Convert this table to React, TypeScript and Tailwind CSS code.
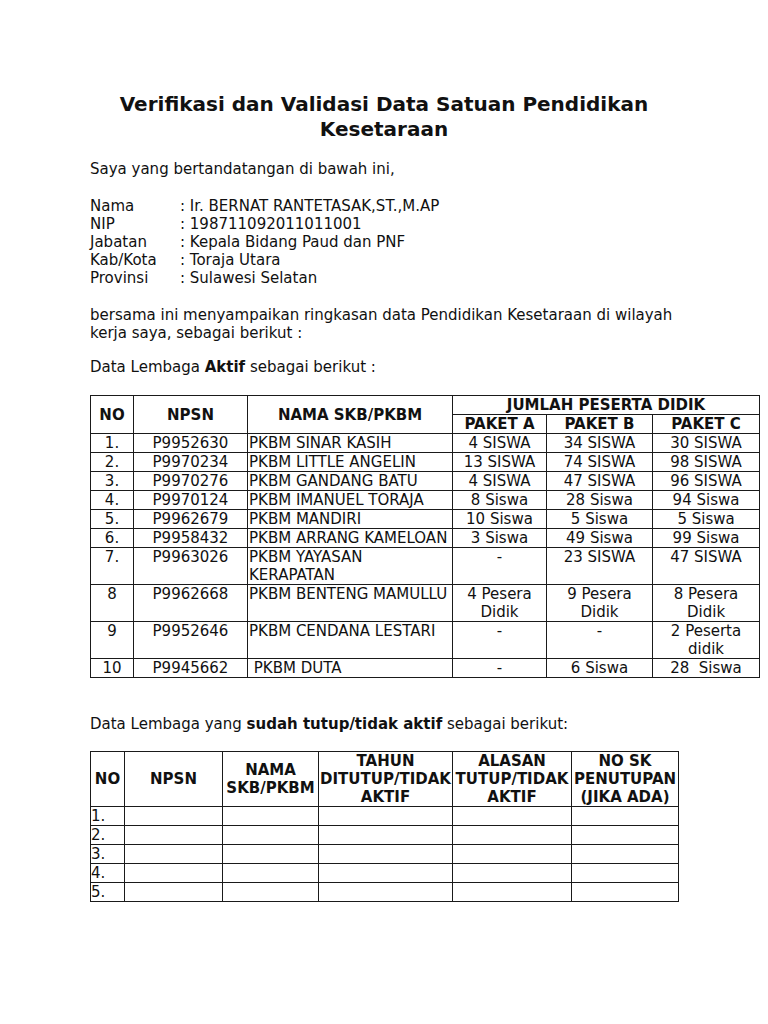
const aktif = [
  { no: "1.", npsn: "P9952630", nama: "PKBM SINAR KASIH", a: "4 SISWA", b: "34 SISWA", c: "30 SISWA" },
  { no: "2.", npsn: "P9970234", nama: "PKBM LITTLE ANGELIN", a: "13 SISWA", b: "74 SISWA", c: "98 SISWA" },
  { no: "3.", npsn: "P9970276", nama: "PKBM GANDANG BATU", a: "4 SISWA", b: "47 SISWA", c: "96 SISWA" },
  { no: "4.", npsn: "P9970124", nama: "PKBM IMANUEL TORAJA", a: "8 Siswa", b: "28 Siswa", c: "94 Siswa" },
  { no: "5.", npsn: "P9962679", nama: "PKBM MANDIRI", a: "10 Siswa", b: "5 Siswa", c: "5 Siswa" },
  { no: "6.", npsn: "P9958432", nama: "PKBM ARRANG KAMELOAN", a: "3 Siswa", b: "49 Siswa", c: "99 Siswa" },
  { no: "7.", npsn: "P9963026", nama: "PKBM YAYASAN KERAPATAN", a: "-", b: "23 SISWA", c: "47 SISWA" },
  { no: "8", npsn: "P9962668", nama: "PKBM BENTENG MAMULLU", a: "4 Pesera Didik", b: "9 Pesera Didik", c: "8 Pesera Didik" },
  { no: "9", npsn: "P9952646", nama: "PKBM CENDANA LESTARI", a: "-", b: "-", c: "2 Peserta didik" },
  { no: "10", npsn: "P9945662", nama: " PKBM DUTA", a: "-", b: "6 Siswa", c: "28\u00a0 Siswa" },
]

const identitas = [
  ["Nama", ": Ir. BERNAT RANTETASAK,ST.,M.AP"],
  ["NIP", ": 198711092011011001"],
  ["Jabatan", ": Kepala Bidang Paud dan PNF"],
  ["Kab/Kota", ": Toraja Utara"],
  ["Provinsi", ": Sulawesi Selatan"],
]

const cell = "border border-[#1a1a1a] align-top leading-[18px] p-0"

export default function App() {
  return (
    <div
      className="min-h-screen w-[768px] bg-white px-[90px] pt-[92px] text-[15px] leading-[18px] text-[#111]"
      style={{ fontFamily: '"DejaVu Sans", sans-serif' }}
    >
      {/* Judul */}
      <h1 className="text-center text-[20px] font-bold leading-[25px]">
        Verifikasi dan Validasi Data Satuan Pendidikan
        <br />
        Kesetaraan
      </h1>

      <p className="mt-[18px]">Saya yang bertandatangan di bawah ini,</p>

      <div className="mt-[19px]">
        {identitas.map(([label, value]) => (
          <div key={label} className="flex">
            <span className="w-[90px] shrink-0">{label}</span>
            <span>{value}</span>
          </div>
        ))}
      </div>

      <p className="mt-[19px]">
        bersama ini menyampaikan ringkasan data Pendidikan Kesetaraan di wilayah kerja saya, sebagai berikut :
      </p>

      <p className="mt-[16px]">
        Data Lembaga <b>Aktif</b> sebagai berikut :
      </p>

      {/* Tabel lembaga aktif */}
      <table className="mt-[19px] w-[669px] table-fixed border-collapse">
        <colgroup>
          <col className="w-[43px]" />
          <col className="w-[114px]" />
          <col className="w-[205px]" />
          <col className="w-[94px]" />
          <col className="w-[106px]" />
          <col className="w-[107px]" />
        </colgroup>
        <thead>
          <tr>
            <th rowSpan={2} className={`${cell} !align-middle text-center font-bold`}>NO</th>
            <th rowSpan={2} className={`${cell} !align-middle text-center font-bold`}>NPSN</th>
            <th rowSpan={2} className={`${cell} !align-middle text-center font-bold`}>NAMA SKB/PKBM</th>
            <th colSpan={3} className={`${cell} text-center font-bold`}>JUMLAH PESERTA DIDIK</th>
          </tr>
          <tr>
            <th className={`${cell} text-center font-bold`}>PAKET A</th>
            <th className={`${cell} text-center font-bold`}>PAKET B</th>
            <th className={`${cell} text-center font-bold`}>PAKET C</th>
          </tr>
        </thead>
        <tbody>
          {aktif.map((r) => (
            <tr key={r.npsn}>
              <td className={`${cell} text-center`}>{r.no}</td>
              <td className={`${cell} text-center`}>{r.npsn}</td>
              <td className={`${cell} whitespace-pre-wrap pl-[1px]`}>{r.nama}</td>
              <td className={`${cell} text-center`}>{r.a}</td>
              <td className={`${cell} text-center`}>{r.b}</td>
              <td className={`${cell} text-center`}>{r.c}</td>
            </tr>
          ))}
        </tbody>
      </table>

      <p className="mt-[37px]">
        Data Lembaga yang <b>sudah tutup/tidak aktif</b> sebagai berikut:
      </p>

      {/* Tabel lembaga tidak aktif */}
      <table className="mt-[18px] w-[588px] table-fixed border-collapse">
        <colgroup>
          <col className="w-[34px]" />
          <col className="w-[98px]" />
          <col className="w-[96px]" />
          <col className="w-[134px]" />
          <col className="w-[119px]" />
          <col className="w-[107px]" />
        </colgroup>
        <thead>
          <tr>
            <th className={`${cell} !align-middle text-center font-bold`}>NO</th>
            <th className={`${cell} !align-middle text-center font-bold`}>NPSN</th>
            <th className={`${cell} !align-middle text-center font-bold`}>NAMA SKB/PKBM</th>
            <th className={`${cell} text-center font-bold`}>TAHUN DITUTUP/TIDAK AKTIF</th>
            <th className={`${cell} text-center font-bold`}>ALASAN TUTUP/TIDAK AKTIF</th>
            <th className={`${cell} text-center font-bold`}>NO SK PENUTUPAN (JIKA ADA)</th>
          </tr>
        </thead>
        <tbody>
          {["1.", "2.", "3.", "4.", "5."].map((n) => (
            <tr key={n}>
              <td className={cell}>{n}</td>
              <td className={cell}></td>
              <td className={cell}></td>
              <td className={cell}></td>
              <td className={cell}></td>
              <td className={cell}></td>
            </tr>
          ))}
        </tbody>
      </table>
    </div>
  )
}
